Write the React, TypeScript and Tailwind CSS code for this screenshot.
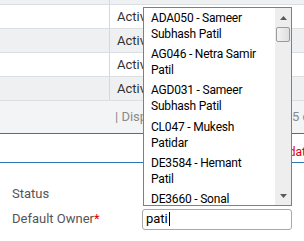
import React from "react";

const items = [
  "ADA050 - Sameer Subhash Patil",
  "AG046 - Netra Samir Patil",
  "AGD031 - Sameer Subhash Patil",
  "CL047 - Mukesh Patidar",
  "DE3584 - Hemant Patil",
  "DE3660 - Sonal Sanjay Patil",
];

function Row({ gray }: { gray: boolean }) {
  return (
    <div
      className={`flex h-[24px] border-b border-[#dcdfe1] ${gray ? "bg-[#eef0f1]" : "bg-white"}`}
    >
      <div className="w-[110px] shrink-0 border-r border-[#d6d9db]" />
      <div className="flex items-center pl-[7px] text-[13px] text-[#333]">Active</div>
    </div>
  );
}

export default function App() {
  return (
    <div
      className="relative w-[304px] h-[241px] overflow-hidden bg-white"
      style={{ fontFamily: "Roboto, 'Liberation Sans', sans-serif" }}
    >
      {/* table */}
      <div className="h-[5px] bg-[#eef0f1] border-b border-[#dcdfe1] flex">
        <div className="w-[110px] shrink-0 border-r border-[#d6d9db]" />
      </div>
      <Row gray={false} />
      <Row gray={true} />
      <Row gray={false} />
      <Row gray={true} />
      <div className="h-[32px] bg-[#f3f4f5] flex items-center pl-[115px] text-[13px] text-[#8a8a8a] whitespace-nowrap">
        <span className="w-[177px] shrink-0 overflow-hidden">| Displaying 1 - 4 of</span>
        <span>5 contacts</span>
      </div>
      <div className="h-[1px] bg-[#2b78b5]" />
      <div className="h-[28px] pt-[11px] pl-[265px] text-[12px] leading-[14px] text-[#e00000] whitespace-nowrap">
        Mandatory fields
      </div>
      <div className="h-[1px] bg-[#2b78b5]" />

      {/* form */}
      <div className="pt-[18px] text-[13px] text-[#555]">
        <div className="flex h-[26px] items-center pl-[12px]">Status</div>
        <div className="flex h-[24px] items-center">
          <div className="w-[142px] shrink-0 pl-[12px] pb-[1px]">
            Default Owner<span className="text-[#e00000]">*</span>
          </div>
          <div className="flex h-[21px] w-[150px] items-center rounded-[3px] border border-[#a9a9a9] bg-white pl-[3px] text-[13px] text-black">
            pati<span className="ml-[1px] inline-block h-[14px] w-[1px] bg-black" />
          </div>
        </div>
      </div>

      {/* dropdown list overlay */}
      <div className="absolute left-[143px] top-[7px] flex h-[199px] w-[149px] border border-[#7f7f7f] bg-white">
        <div className="flex-1 overflow-hidden">
          {items.map((t) => (
            <div
              key={t}
              className="py-[2px] pl-[7px] pr-[12px] text-[12px] leading-[16.1px] tracking-[-0.2px] text-black"
            >
              {t}
            </div>
          ))}
        </div>
        <div className="flex w-[16px] shrink-0 flex-col items-center bg-[#eeeeee]">
          <div className="flex h-[19px] w-full items-center justify-center">
            <svg width="7" height="4" viewBox="0 0 7 4">
              <path d="M3.5 0 L7 4 L0 4 Z" fill="#5a5a5a" />
            </svg>
          </div>
          <div className="h-[15px] w-[14px] rounded-[2px] border border-[#9a9a9a] bg-gradient-to-r from-[#f4f4f4] to-[#dedede]" />
          <div className="flex-1" />
          <div className="flex h-[19px] w-full items-center justify-center">
            <svg width="7" height="4" viewBox="0 0 7 4">
              <path d="M0 0 L7 0 L3.5 4 Z" fill="#5a5a5a" />
            </svg>
          </div>
        </div>
      </div>
    </div>
  );
}
